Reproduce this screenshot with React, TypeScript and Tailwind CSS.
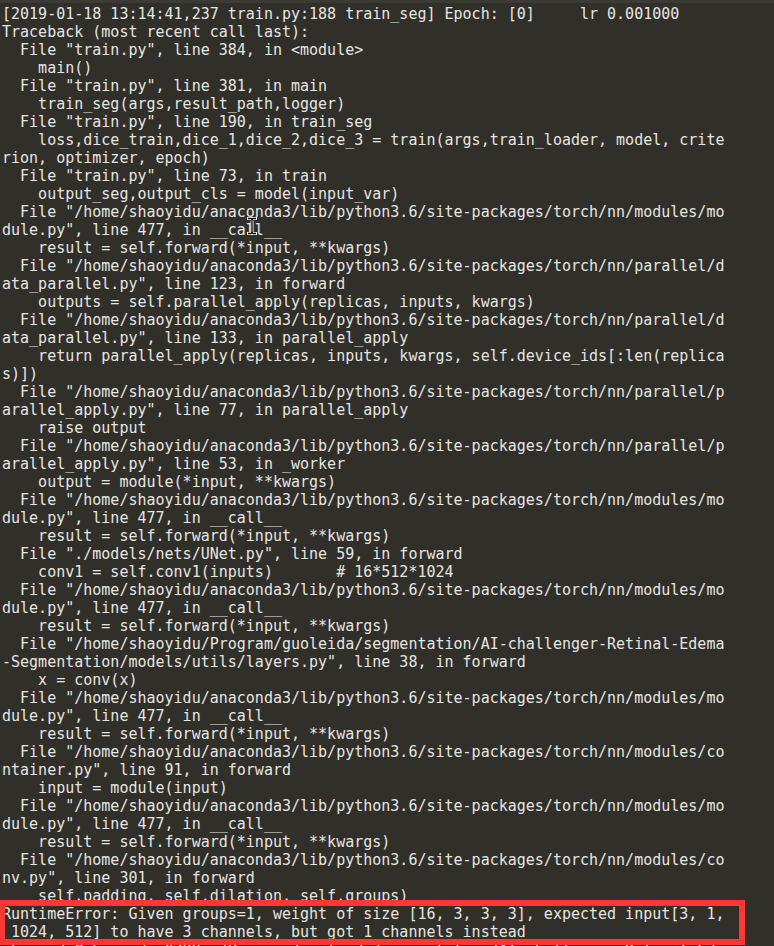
import React from "react";

const lines: string[] = [
  "[2019-01-18 13:14:41,237 train.py:188 train_seg] Epoch: [0]     lr 0.001000",
  "Traceback (most recent call last):",
  '  File "train.py", line 384, in <module>',
  "    main()",
  '  File "train.py", line 381, in main',
  "    train_seg(args,result_path,logger)",
  '  File "train.py", line 190, in train_seg',
  "    loss,dice_train,dice_1,dice_2,dice_3 = train(args,train_loader, model, crite",
  "rion, optimizer, epoch)",
  '  File "train.py", line 73, in train',
  "    output_seg,output_cls = model(input_var)",
  '  File "/home/shaoyidu/anaconda3/lib/python3.6/site-packages/torch/nn/modules/mo',
  'dule.py", line 477, in __call__',
  "    result = self.forward(*input, **kwargs)",
  '  File "/home/shaoyidu/anaconda3/lib/python3.6/site-packages/torch/nn/parallel/d',
  'ata_parallel.py", line 123, in forward',
  "    outputs = self.parallel_apply(replicas, inputs, kwargs)",
  '  File "/home/shaoyidu/anaconda3/lib/python3.6/site-packages/torch/nn/parallel/d',
  'ata_parallel.py", line 133, in parallel_apply',
  "    return parallel_apply(replicas, inputs, kwargs, self.device_ids[:len(replica",
  "s)])",
  '  File "/home/shaoyidu/anaconda3/lib/python3.6/site-packages/torch/nn/parallel/p',
  'arallel_apply.py", line 77, in parallel_apply',
  "    raise output",
  '  File "/home/shaoyidu/anaconda3/lib/python3.6/site-packages/torch/nn/parallel/p',
  'arallel_apply.py", line 53, in _worker',
  "    output = module(*input, **kwargs)",
  '  File "/home/shaoyidu/anaconda3/lib/python3.6/site-packages/torch/nn/modules/mo',
  'dule.py", line 477, in __call__',
  "    result = self.forward(*input, **kwargs)",
  '  File "./models/nets/UNet.py", line 59, in forward',
  "    conv1 = self.conv1(inputs)       # 16*512*1024",
  '  File "/home/shaoyidu/anaconda3/lib/python3.6/site-packages/torch/nn/modules/mo',
  'dule.py", line 477, in __call__',
  "    result = self.forward(*input, **kwargs)",
  '  File "/home/shaoyidu/Program/guoleida/segmentation/AI-challenger-Retinal-Edema',
  '-Segmentation/models/utils/layers.py", line 38, in forward',
  "    x = conv(x)",
  '  File "/home/shaoyidu/anaconda3/lib/python3.6/site-packages/torch/nn/modules/mo',
  'dule.py", line 477, in __call__',
  "    result = self.forward(*input, **kwargs)",
  '  File "/home/shaoyidu/anaconda3/lib/python3.6/site-packages/torch/nn/modules/co',
  'ntainer.py", line 91, in forward',
  "    input = module(input)",
  '  File "/home/shaoyidu/anaconda3/lib/python3.6/site-packages/torch/nn/modules/mo',
  'dule.py", line 477, in __call__',
  "    result = self.forward(*input, **kwargs)",
  '  File "/home/shaoyidu/anaconda3/lib/python3.6/site-packages/torch/nn/modules/co',
  'nv.py", line 301, in forward',
  "    self.padding, self.dilation, self.groups)",
  "RuntimeError: Given groups=1, weight of size [16, 3, 3, 3], expected input[3, 1,",
  " 1024, 512] to have 3 channels, but got 1 channels instead",
  "shaoyidu@shaoyidu-X299:~/Program/guoleida/segmentation/AI-challenger-Retinal-Ed",
];

export default function App() {
  return (
    <div className="relative h-[946px] w-[774px] overflow-hidden bg-[#302f2a]">
      <div className="h-[3px] bg-[#3b3a35]" />
      <div
        className="whitespace-pre pl-[2px] pt-[2px] text-[15px] leading-[18px] text-[#e6e6e1]"
        style={{ fontFamily: '"DejaVu Sans Mono", "Liberation Mono", monospace' }}
      >
        {lines.map((l, i) => (
          <div key={i} className="h-[18px]">
            {l}
          </div>
        ))}
      </div>

      {/* red highlight box */}
      <div className="absolute left-0 top-[900px] h-[45px] w-[745px] border-[6px] border-l-[5px] border-[#fd3636]" />

      {/* mouse I-beam cursor */}
      <svg
        className="absolute left-[247px] top-[217px]"
        width="10"
        height="18"
        viewBox="0 0 10 18"
      >
        <path
          d="M1 1.5h3l1 1 1-1h3M5 2.5v13M1 16.5h3l1-1 1 1h3"
          fill="none"
          stroke="#ffffff"
          strokeWidth="3"
          strokeLinecap="square"
        />
        <path
          d="M1 1.5h3l1 1 1-1h3M5 2.5v13M1 16.5h3l1-1 1 1h3"
          fill="none"
          stroke="#000000"
          strokeWidth="1.3"
        />
      </svg>
    </div>
  );
}
